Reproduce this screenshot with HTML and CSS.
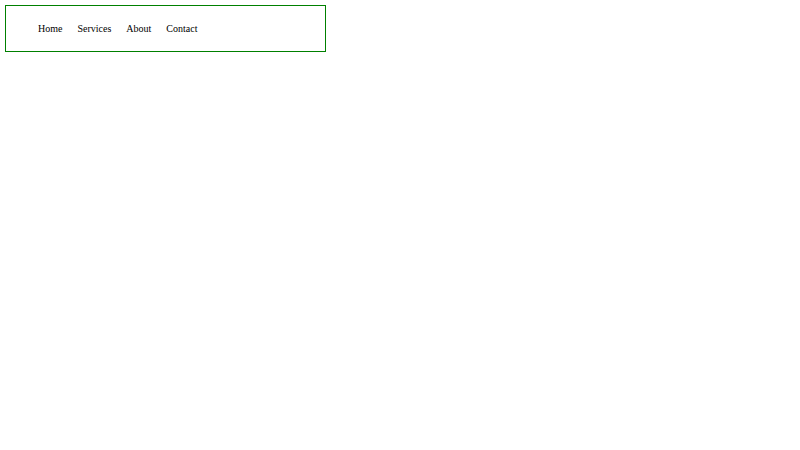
FILE: index.html
```html
<!DOCTYPE html>
<html>
<head>
<meta charset="utf-8">
<link rel="stylesheet" href="styles.css">
</head>
<body>
<nav class="navbar">
  <ul class="nav-list">
    <li><a href="#">Home</a></li>
    <li><a href="#">Services</a></li>
    <li><a href="#">About</a></li>
    <li><a href="#">Contact</a></li>
  </ul>
</nav>
</body>
</html>
```
FILE: styles.css
```css
body {
  margin: 5px;
  font-family: "Liberation Serif", "Times New Roman", serif;
  background: #fff;
}
.navbar {
  box-sizing: border-box;
  width: 321px;
  height: 47px;
  padding-bottom: 4px;
  border: 1px solid green;
  display: flex;
  align-items: center;
}
.nav-list {
  list-style: none;
  margin: 0;
  padding: 0 0 0 32px;
  display: flex;
  gap: 15px;
}
.nav-list a {
  color: #000;
  text-decoration: none;
  font-size: 10px;
  line-height: 12px;
}
```
